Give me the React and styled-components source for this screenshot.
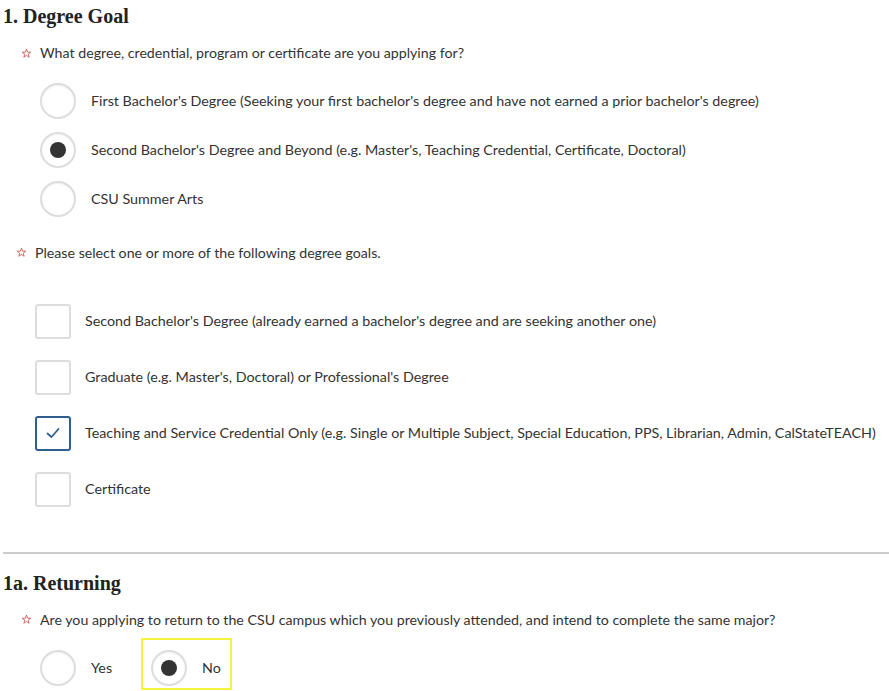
import React, { useState } from "react";
import styled, { createGlobalStyle } from "styled-components";

const GlobalStyle = createGlobalStyle`
  body {
    margin: 0;
    background: #fff;
    font-family: "Lato", "Liberation Sans", sans-serif;
    color: #333;
  }
`;

const firstGoals = [
  "First Bachelor's Degree (Seeking your first bachelor's degree and have not earned a prior bachelor's degree)",
  "Second Bachelor's Degree and Beyond (e.g. Master's, Teaching Credential, Certificate, Doctoral)",
  "CSU Summer Arts",
];

const degreeGoals = [
  "Second Bachelor's Degree (already earned a bachelor's degree and are seeking another one)",
  "Graduate (e.g. Master's, Doctoral) or Professional's Degree",
  "Teaching and Service Credential Only (e.g. Single or Multiple Subject, Special Education, PPS, Librarian, Admin, CalStateTEACH)",
  "Certificate",
];

const Star = () => (
  <StarIcon viewBox="0 0 12 12" aria-hidden="true">
    <path
      d="M6 1.2 L7.2 4.5 L10.7 4.6 L7.9 6.7 L8.9 10.1 L6 8.1 L3.1 10.1 L4.1 6.7 L1.3 4.6 L4.8 4.5 Z"
      fill="none"
      stroke="#c0504d"
      strokeWidth="0.9"
      strokeLinejoin="round"
    />
  </StarIcon>
);

const Question = ({ indent, children }) => (
  <Prompt $indent={indent}>
    <Star />
    <span>{children}</span>
  </Prompt>
);

const Radio = ({ label, checked, highlight, onSelect }) => (
  <RadioRow $highlight={highlight} onClick={onSelect}>
    <Circle $checked={checked} />
    <OptionLabel>{label}</OptionLabel>
  </RadioRow>
);

const Checkbox = ({ label, checked, onToggle }) => (
  <CheckRow onClick={onToggle}>
    <Box $checked={checked}>
      {checked && (
        <svg width="18" height="18" viewBox="0 0 18 18">
          <path
            d="M3.5 9.5 L7.5 13 L14.5 5"
            fill="none"
            stroke="#2f5f8f"
            strokeWidth="1.8"
            strokeLinecap="round"
            strokeLinejoin="round"
          />
        </svg>
      )}
    </Box>
    <OptionLabel>{label}</OptionLabel>
  </CheckRow>
);

export default function App() {
  const [goal, setGoal] = useState(1);
  const [checked, setChecked] = useState([false, false, true, false]);
  const [returning, setReturning] = useState("No");

  const toggle = (i) =>
    setChecked((prev) => prev.map((v, idx) => (idx === i ? !v : v)));

  return (
    <Page>
      <GlobalStyle />
      <Section>
        <Heading>1. Degree Goal</Heading>
        <Question indent={18}>
          What degree, credential, program or certificate are you applying for?
        </Question>
        <RadioList>
          {firstGoals.map((g, i) => (
            <Radio
              key={g}
              label={g}
              checked={goal === i}
              onSelect={() => setGoal(i)}
            />
          ))}
        </RadioList>
        <Question indent={13}>
          Please select one or more of the following degree goals.
        </Question>
        <CheckList>
          {degreeGoals.map((g, i) => (
            <Checkbox
              key={g}
              label={g}
              checked={checked[i]}
              onToggle={() => toggle(i)}
            />
          ))}
        </CheckList>
      </Section>
      <Divider />
      <Section>
        <Heading>1a. Returning</Heading>
        <Question indent={18}>
          Are you applying to return to the CSU campus which you previously
          attended, and intend to complete the same major?
        </Question>
        <InlineRadios>
          {["Yes", "No"].map((opt) => (
            <Radio
              key={opt}
              label={opt}
              checked={returning === opt}
              highlight={opt === "No"}
              onSelect={() => setReturning(opt)}
            />
          ))}
        </InlineRadios>
      </Section>
    </Page>
  );
}

//********************************************************  style component
const Page = styled.div`
  width: 889px;
  padding-left: 3px;
  box-sizing: border-box;
`;

const Section = styled.section`
  display: flex;
  flex-direction: column;
`;

const Heading = styled.h2`
  margin: 0;
  font-family: "Liberation Serif", "DejaVu Serif", serif;
  font-weight: bold;
  font-size: 20px;
  line-height: 32px;
  color: #222;
`;

const Prompt = styled.div`
  display: flex;
  align-items: center;
  gap: 8px;
  margin-top: 10px;
  padding-left: ${(p) => p.$indent}px;
  font-size: 14.2px;
  line-height: 22px;
  color: #333;
`;

const StarIcon = styled.svg`
  width: 11px;
  height: 11px;
  flex-shrink: 0;
`;

const RadioList = styled.div`
  display: flex;
  flex-direction: column;
  margin: 12.5px 0 8px 37px;
`;

const InlineRadios = styled.div`
  display: flex;
  gap: 29px;
  margin: 12.5px 0 0 37px;
`;

const RadioRow = styled.div`
  display: flex;
  align-items: center;
  gap: 15px;
  height: 49px;
  cursor: pointer;
  box-sizing: border-box;
  ${(p) =>
    p.$highlight &&
    `
    height: 52px;
    margin-top: -5.5px;
    padding: 8px 9px 0 8px;
    border: 2px solid #f4f43c;
  `}
`;

const Circle = styled.span`
  position: relative;
  width: 36px;
  height: 36px;
  border-radius: 50%;
  border: 2px solid #ddd;
  box-sizing: border-box;
  box-shadow: inset 0 1px 2px rgba(0, 0, 0, 0.06);
  flex-shrink: 0;

  &::after {
    content: "";
    position: absolute;
    top: 50%;
    left: 50%;
    width: 16px;
    height: 16px;
    margin: -8px 0 0 -8px;
    border-radius: 50%;
    background: #333;
    display: ${(p) => (p.$checked ? "block" : "none")};
  }
`;

const OptionLabel = styled.span`
  font-size: 14.3px;
  line-height: 20px;
  color: #333;
  white-space: nowrap;
`;

const CheckList = styled.div`
  display: flex;
  flex-direction: column;
  margin: 29.5px 0 0 32px;
`;

const CheckRow = styled.div`
  display: flex;
  align-items: center;
  gap: 14px;
  height: 56px;
  cursor: pointer;
`;

const Box = styled.span`
  display: flex;
  align-items: center;
  justify-content: center;
  width: 36px;
  height: 35px;
  box-sizing: border-box;
  border-radius: 3px;
  border: 2px solid ${(p) => (p.$checked ? "#2f5f8f" : "#ddd")};
  flex-shrink: 0;
`;

const Divider = styled.hr`
  margin: 34.5px 0 13px;
  border: none;
  border-top: 2px solid #ccc;
`;
